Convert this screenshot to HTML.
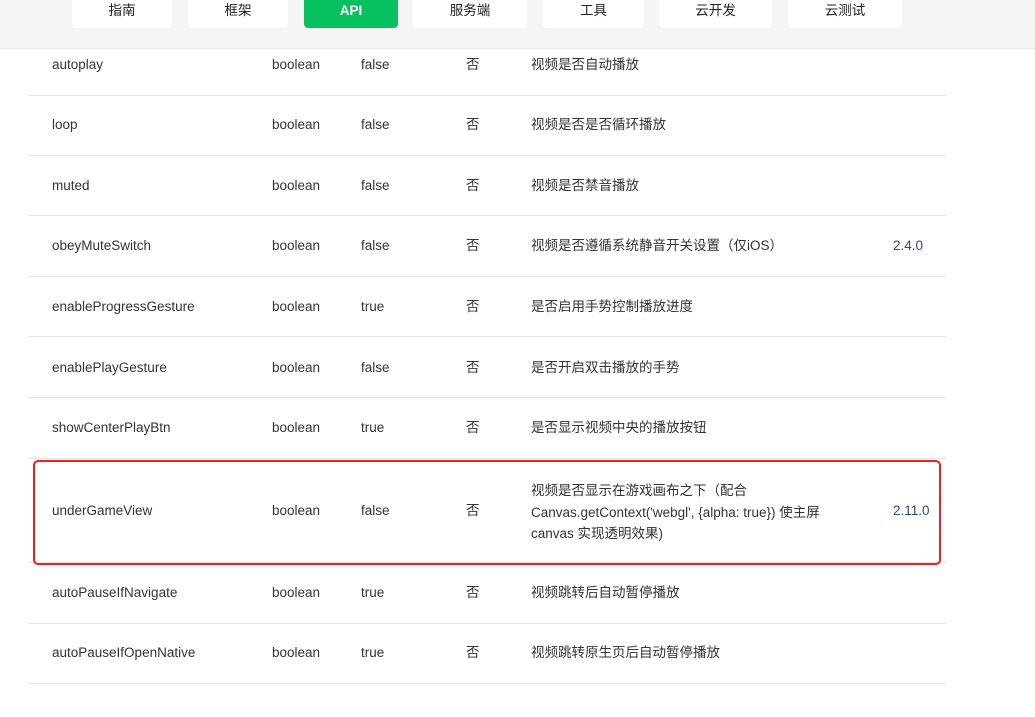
<!DOCTYPE html>
<html><head><meta charset="utf-8"><style>
body{margin:0;width:1035px;height:717px;background:#fff;font-family:"Liberation Sans","Noto Sans CJK SC",sans-serif;font-size:13.5px;color:#333;position:relative;overflow:hidden}
.hdr{position:absolute;left:0;top:0;width:1035px;height:48px;background:#f5f5f5;border-bottom:1px solid #ececec}
.btn{position:absolute;top:0;height:28px;background:#fff;border-radius:0 0 4px 4px;text-align:center;line-height:22px;font-size:13.5px;color:#222}
.btn.g{background:#07c160;color:#fff;font-weight:bold}
.row{position:absolute;left:28px;width:918px;border-bottom:1px solid #e4e4e4}
.c{position:absolute;white-space:nowrap;line-height:18px}
.v{color:#2b4a7e}
.red{position:absolute;left:33px;top:460px;width:904px;height:101px;border:2px solid #f02020;border-radius:5px}
</style></head><body>
<div class="hdr">
<div class="btn" style="left:72px;width:100px">指南</div>
<div class="btn" style="left:188px;width:100px">框架</div>
<div class="btn g" style="left:304px;width:94px">API</div>
<div class="btn" style="left:413px;width:114px">服务端</div>
<div class="btn" style="left:543px;width:101px">工具</div>
<div class="btn" style="left:659px;width:113px">云开发</div>
<div class="btn" style="left:788px;width:114px">云测试</div>
</div>

<div class="row" style="top:49px;height:46px"></div>
<div class="row" style="top:95px;height:60px"></div>
<div class="row" style="top:155px;height:60px"></div>
<div class="row" style="top:216px;height:60px"></div>
<div class="row" style="top:276px;height:60px"></div>
<div class="row" style="top:337px;height:60px"></div>
<div class="row" style="top:398px;height:60px"></div>
<div class="row" style="top:458px;height:104px"></div>
<div class="row" style="top:563px;height:60px"></div>
<div class="row" style="top:623px;height:60px"></div>

<div class="c" style="left:52px;top:56px">autoplay</div><div class="c" style="left:272px;top:56px">boolean</div><div class="c" style="left:361px;top:56px">false</div><div class="c" style="left:466px;top:56px">否</div><div class="c" style="left:531px;top:56px">视频是否自动播放</div>
<div class="c" style="left:52px;top:116px">loop</div><div class="c" style="left:272px;top:116px">boolean</div><div class="c" style="left:361px;top:116px">false</div><div class="c" style="left:466px;top:116px">否</div><div class="c" style="left:531px;top:116px">视频是否是否循环播放</div>
<div class="c" style="left:52px;top:177px">muted</div><div class="c" style="left:272px;top:177px">boolean</div><div class="c" style="left:361px;top:177px">false</div><div class="c" style="left:466px;top:177px">否</div><div class="c" style="left:531px;top:177px">视频是否禁音播放</div>
<div class="c" style="left:52px;top:237px">obeyMuteSwitch</div><div class="c" style="left:272px;top:237px">boolean</div><div class="c" style="left:361px;top:237px">false</div><div class="c" style="left:466px;top:237px">否</div><div class="c" style="left:531px;top:237px">视频是否遵循系统静音开关设置（仅iOS）</div><div class="c v" style="left:893px;top:237px">2.4.0</div>
<div class="c" style="left:52px;top:298px">enableProgressGesture</div><div class="c" style="left:272px;top:298px">boolean</div><div class="c" style="left:361px;top:298px">true</div><div class="c" style="left:466px;top:298px">否</div><div class="c" style="left:531px;top:298px">是否启用手势控制播放进度</div>
<div class="c" style="left:52px;top:359px">enablePlayGesture</div><div class="c" style="left:272px;top:359px">boolean</div><div class="c" style="left:361px;top:359px">false</div><div class="c" style="left:466px;top:359px">否</div><div class="c" style="left:531px;top:359px">是否开启双击播放的手势</div>
<div class="c" style="left:52px;top:419px">showCenterPlayBtn</div><div class="c" style="left:272px;top:419px">boolean</div><div class="c" style="left:361px;top:419px">true</div><div class="c" style="left:466px;top:419px">否</div><div class="c" style="left:531px;top:419px">是否显示视频中央的播放按钮</div>
<div class="c" style="left:52px;top:502px">underGameView</div><div class="c" style="left:272px;top:502px">boolean</div><div class="c" style="left:361px;top:502px">false</div><div class="c" style="left:466px;top:502px">否</div>
<div class="c" style="left:531px;top:480px;line-height:21.5px">视频是否显示在游戏画布之下（配合<br>Canvas.getContext('webgl', {alpha: true}) 使主屏<br>canvas 实现透明效果)</div><div class="c v" style="left:893px;top:502px">2.11.0</div>
<div class="c" style="left:52px;top:584px">autoPauseIfNavigate</div><div class="c" style="left:272px;top:584px">boolean</div><div class="c" style="left:361px;top:584px">true</div><div class="c" style="left:466px;top:584px">否</div><div class="c" style="left:531px;top:584px">视频跳转后自动暂停播放</div>
<div class="c" style="left:52px;top:644px">autoPauseIfOpenNative</div><div class="c" style="left:272px;top:644px">boolean</div><div class="c" style="left:361px;top:644px">true</div><div class="c" style="left:466px;top:644px">否</div><div class="c" style="left:531px;top:644px">视频跳转原生页后自动暂停播放</div>
<div class="red"></div>
</body></html>
